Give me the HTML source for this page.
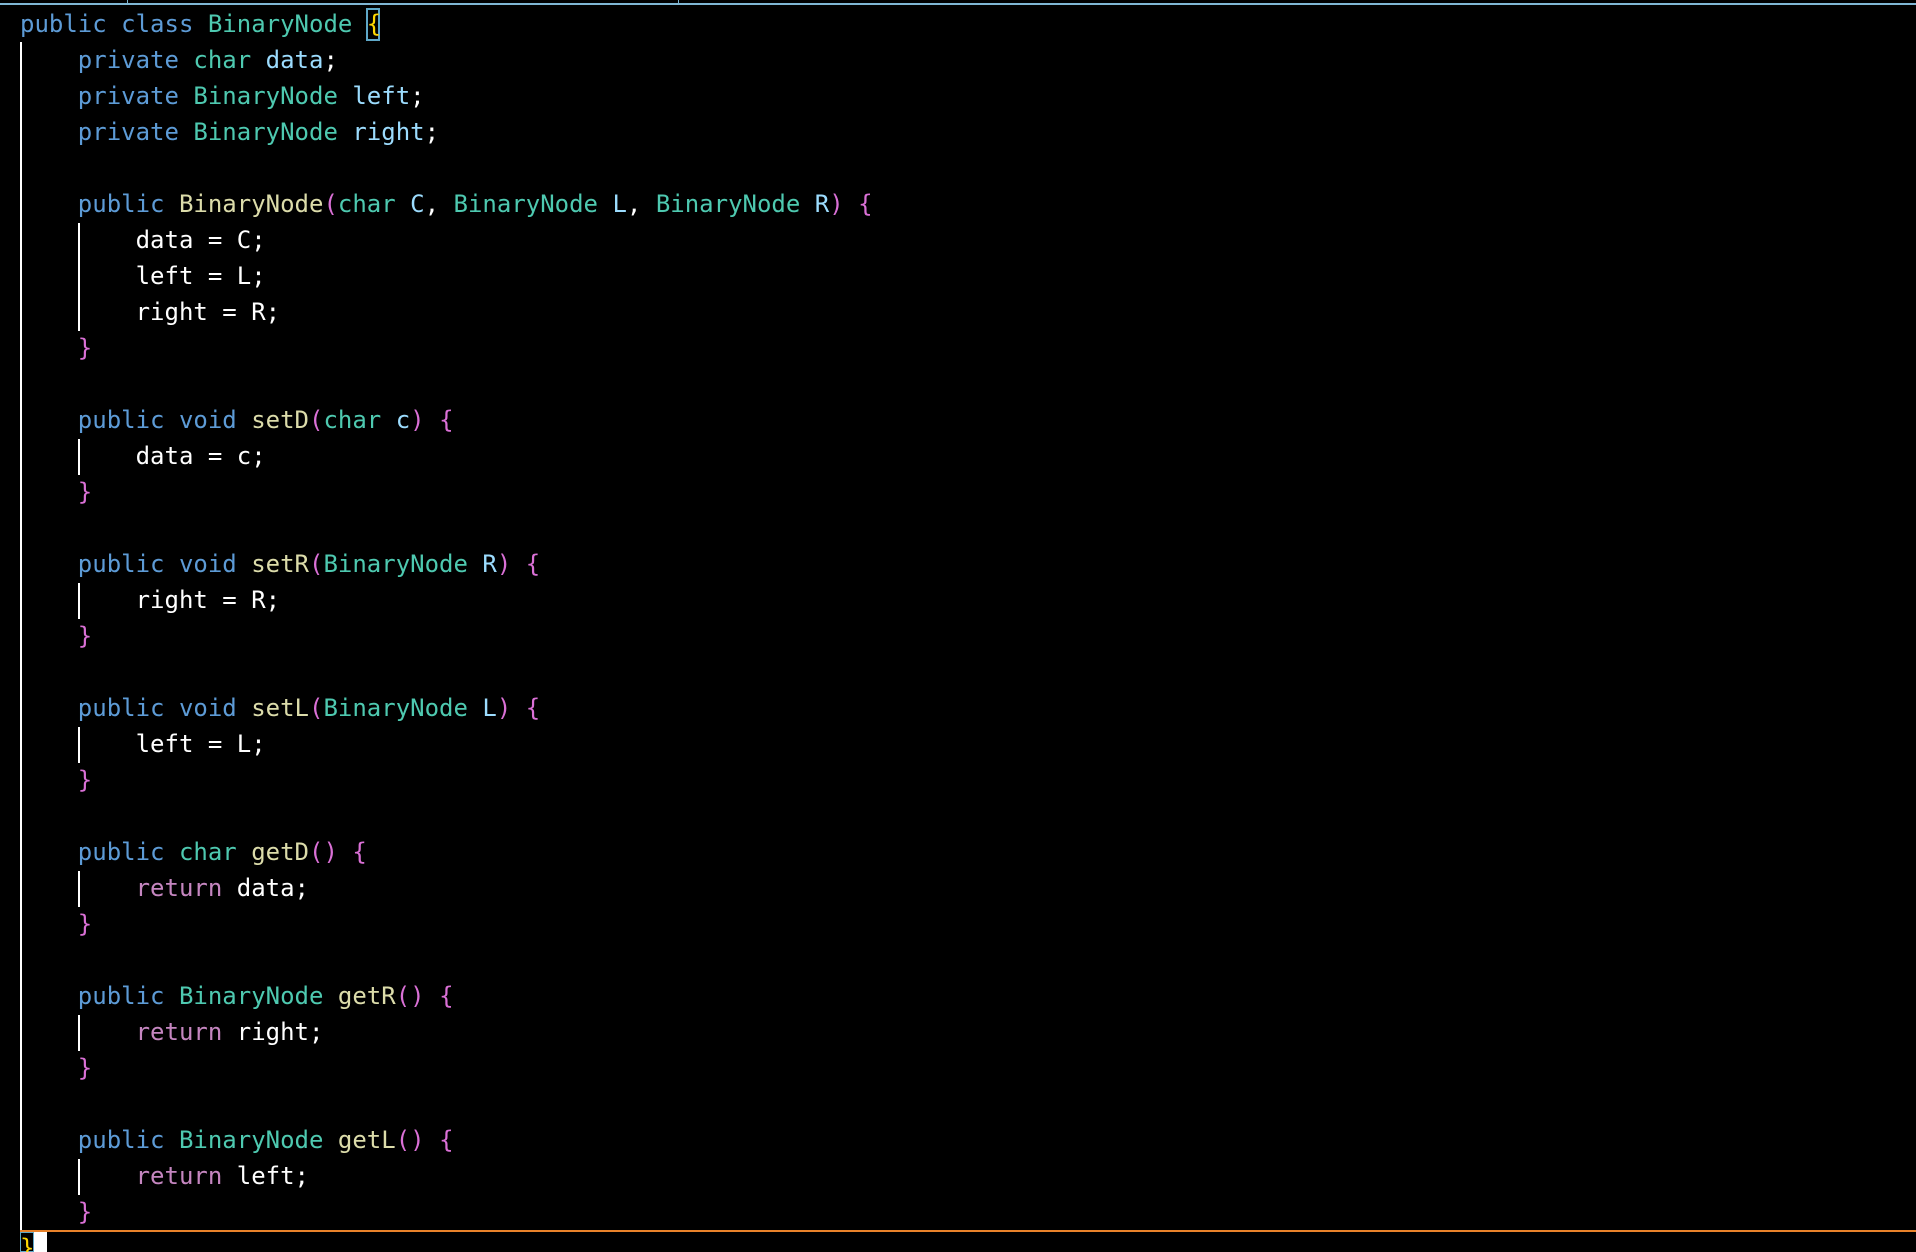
<!DOCTYPE html>
<html><head><meta charset="utf-8"><style>
html,body{margin:0;padding:0;background:#000;width:1916px;height:1252px;overflow:hidden;position:relative}
pre{position:absolute;left:20px;top:6px;margin:0;font-family:"DejaVu Sans Mono","Liberation Mono",monospace;font-size:24px;line-height:36px;color:#fff}
.k{color:#5d9bd6}.t{color:#4ec9b0}.f{color:#dcdcaa}.v{color:#9cdcfe}.p{color:#da70d6}.r{color:#c586c0}.y{color:#ffd700}
.g{position:absolute;background:#fff;width:2px}
</style></head><body>
<div style="position:absolute;left:0;top:3px;width:1916px;height:2px;background:#7fb6d4"></div>
<div style="position:absolute;left:127px;top:0;width:1px;height:4px;background:#7fb6d4"></div>
<div style="position:absolute;left:678px;top:0;width:1px;height:4px;background:#7fb6d4"></div>
<div style="position:absolute;left:366px;top:8px;width:14px;height:33px;border:2px solid #5fa8c8;box-sizing:border-box"></div>
<div class="g" style="left:20px;top:42px;height:1189px"></div>
<div class="g" style="left:78px;top:223px;height:108px"></div>
<div class="g" style="left:78px;top:439px;height:36px"></div>
<div class="g" style="left:78px;top:583px;height:36px"></div>
<div class="g" style="left:78px;top:727px;height:36px"></div>
<div class="g" style="left:78px;top:871px;height:36px"></div>
<div class="g" style="left:78px;top:1015px;height:36px"></div>
<div class="g" style="left:78px;top:1159px;height:36px"></div>
<div style="position:absolute;left:20px;top:1230px;width:1896px;height:2px;background:#e8822a"></div>
<div style="position:absolute;left:20px;top:1232px;width:14px;height:20px;border:1px solid #5fa8c8;box-sizing:border-box"></div>
<div style="position:absolute;left:34px;top:1232px;width:13px;height:20px;background:#fff"></div>
<pre><span class="k">public class</span> <span class="t">BinaryNode</span> <span class="y">{</span>
    <span class="k">private</span> <span class="t">char</span> <span class="v">data</span>;
    <span class="k">private</span> <span class="t">BinaryNode</span> <span class="v">left</span>;
    <span class="k">private</span> <span class="t">BinaryNode</span> <span class="v">right</span>;

    <span class="k">public</span> <span class="f">BinaryNode</span><span class="p">(</span><span class="t">char</span> <span class="v">C</span>, <span class="t">BinaryNode</span> <span class="v">L</span>, <span class="t">BinaryNode</span> <span class="v">R</span><span class="p">)</span> <span class="p">{</span>
        data = C;
        left = L;
        right = R;
    <span class="p">}</span>

    <span class="k">public</span> <span class="k">void</span> <span class="f">setD</span><span class="p">(</span><span class="t">char</span> <span class="v">c</span><span class="p">)</span> <span class="p">{</span>
        data = c;
    <span class="p">}</span>

    <span class="k">public</span> <span class="k">void</span> <span class="f">setR</span><span class="p">(</span><span class="t">BinaryNode</span> <span class="v">R</span><span class="p">)</span> <span class="p">{</span>
        right = R;
    <span class="p">}</span>

    <span class="k">public</span> <span class="k">void</span> <span class="f">setL</span><span class="p">(</span><span class="t">BinaryNode</span> <span class="v">L</span><span class="p">)</span> <span class="p">{</span>
        left = L;
    <span class="p">}</span>

    <span class="k">public</span> <span class="t">char</span> <span class="f">getD</span><span class="p">()</span> <span class="p">{</span>
        <span class="r">return</span> data;
    <span class="p">}</span>

    <span class="k">public</span> <span class="t">BinaryNode</span> <span class="f">getR</span><span class="p">()</span> <span class="p">{</span>
        <span class="r">return</span> right;
    <span class="p">}</span>

    <span class="k">public</span> <span class="t">BinaryNode</span> <span class="f">getL</span><span class="p">()</span> <span class="p">{</span>
        <span class="r">return</span> left;
    <span class="p">}</span>
<span class="y">}</span></pre>
</body></html>
